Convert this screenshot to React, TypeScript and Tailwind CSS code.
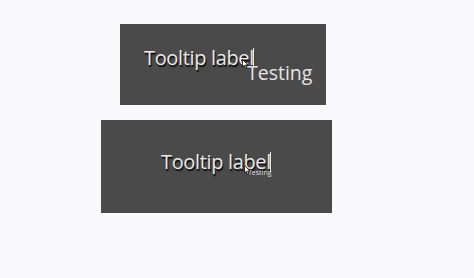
import React from 'react';

const font = { fontFamily: '"Open Sans", "DejaVu Sans", sans-serif' };

function Pointer({ className }: { className: string }) {
  return (
    <svg className={className} width="7" height="10" viewBox="0 0 7 10">
      <path d="M0.5 0.5 L0.5 8 L2.3 6.3 L3.6 9.2 L4.8 8.7 L3.6 5.9 L6 5.9 Z" fill="#fff" stroke="#111" strokeWidth="0.8" />
    </svg>
  );
}

function Label() {
  return (
    <div className="flex items-center">
      <span className="text-[20px] leading-[24px] tracking-[-0.35px] text-[#e8e8e8] [text-shadow:1px_2px_1px_#0c0c0c]">Tooltip label</span>
      <span className="ml-[-1px] w-[1px] h-[20px] bg-[#e8e8e8]" />
    </div>
  );
}

export default function App() {
  return (
    <div className="w-[474px] h-[278px] bg-[#f8f8fd] flex flex-col gap-[15px] pt-[24px] overflow-hidden" style={font}>
      {/* first box: large tooltip */}
      <div className="relative ml-[120px] w-[206px] h-[81px] bg-[#4a4a4a] pl-[24px] pt-[22px]">
        <Label />
        <span className="absolute left-[127px] top-[37px] text-[19.5px] leading-[24px] text-[#e4e4e4]">Testing</span>
        <Pointer className="absolute left-[122px] top-[35px]" />
      </div>

      {/* second box: small tooltip */}
      <div className="relative ml-[101px] w-[231px] h-[93px] bg-[#4a4a4a] pl-[60px] pt-[30px]">
        <Label />
        <span className="absolute left-[147px] top-[48px] text-[7px] leading-[9px] text-[#dcdcdc]">Testing</span>
        <Pointer className="absolute left-[143px] top-[45px]" />
      </div>
    </div>
  );
}
